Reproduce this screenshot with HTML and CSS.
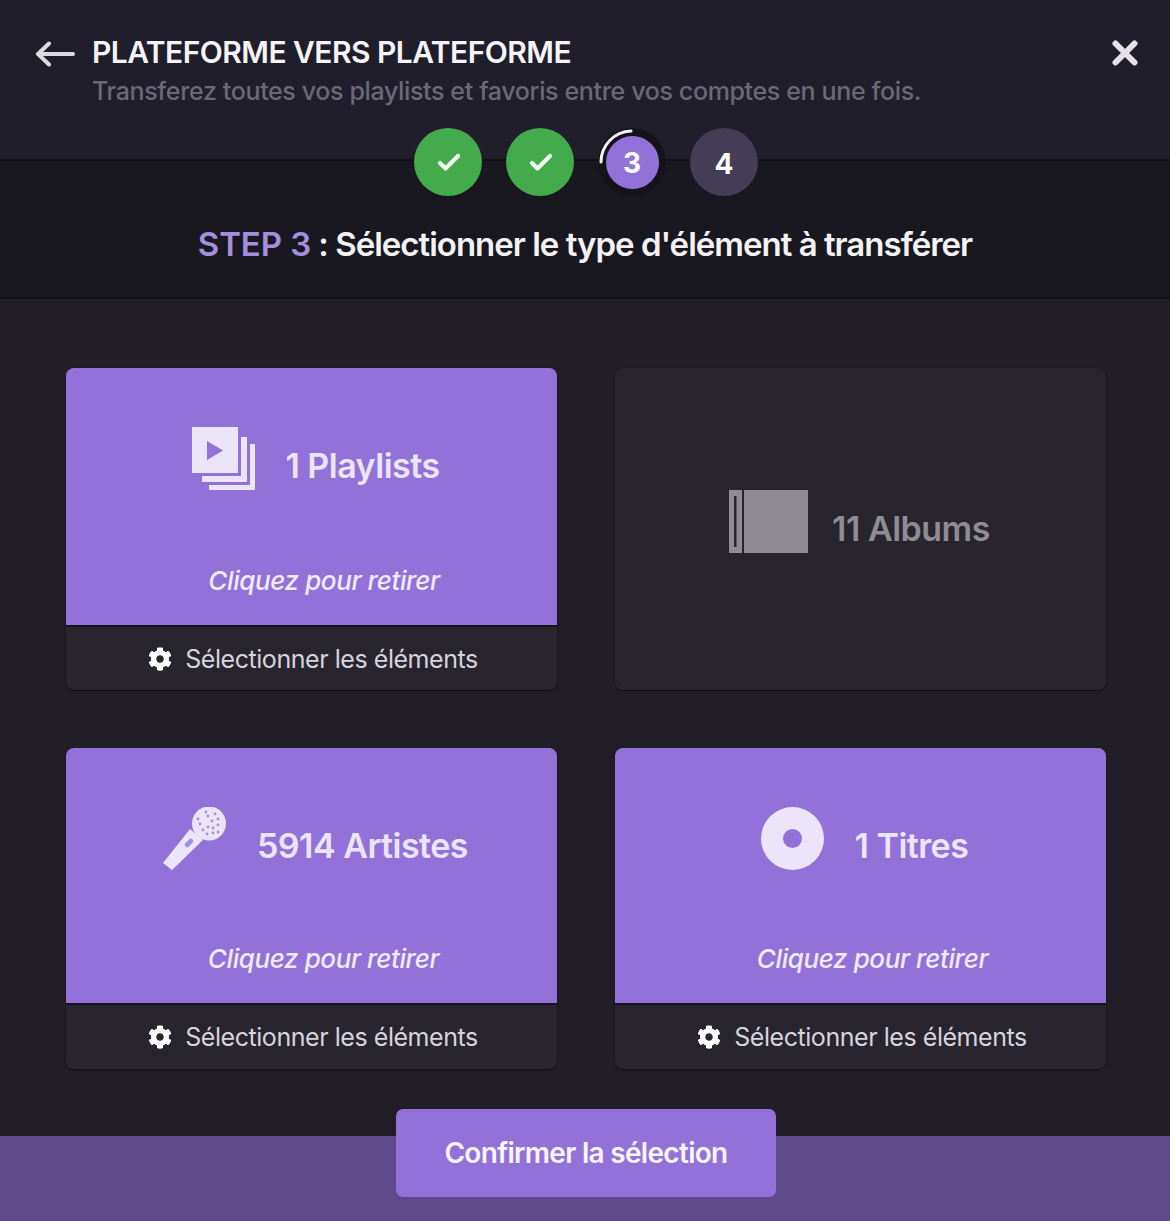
FILE: index.html
```html
<!DOCTYPE html>
<html lang="fr">
<head>
<meta charset="utf-8">
<title>Plateforme vers plateforme</title>
<link rel="stylesheet" href="styles.css">
</head>
<body>
<svg class="defs" width="0" height="0" aria-hidden="true">
  <symbol id="cog" viewBox="0 0 512 512"><path fill="currentColor" d="M487.4 315.7l-42.6-24.6c4.3-23.2 4.3-47 0-70.2l42.6-24.6c4.9-2.8 7.1-8.6 5.5-14-11.1-35.6-30-67.8-54.7-94.6-3.8-4.1-10-5.1-14.8-2.3L380.8 110c-17.9-15.4-38.5-27.3-60.8-35.1V25.8c0-5.6-3.9-10.5-9.4-11.7-36.7-8.2-74.3-7.8-109.2 0-5.5 1.2-9.4 6.1-9.4 11.7V75c-22.2 7.9-42.8 19.8-60.8 35.1L88.7 85.5c-4.9-2.8-11-1.9-14.8 2.3-24.7 26.7-43.6 58.9-54.7 94.6-1.7 5.4.6 11.2 5.5 14L67.3 221c-4.3 23.2-4.3 47 0 70.2l-42.6 24.6c-4.9 2.8-7.1 8.6-5.5 14 11.1 35.6 30 67.8 54.7 94.6 3.8 4.1 10 5.1 14.8 2.3l42.6-24.6c17.9 15.4 38.5 27.3 60.8 35.1v49.2c0 5.6 3.9 10.5 9.4 11.7 36.7 8.2 74.3 7.8 109.2 0 5.5-1.2 9.4-6.1 9.4-11.7v-49.2c22.2-7.9 42.8-19.8 60.8-35.1l42.6 24.6c4.9 2.8 11 1.9 14.8-2.3 24.7-26.7 43.6-58.9 54.7-94.6 1.5-5.5-.7-11.3-5.6-14.1zM256 336c-44.1 0-80-35.9-80-80s35.9-80 80-80 80 35.9 80 80-35.9 80-80 80z"/></symbol>
  <symbol id="check" viewBox="0 0 24 24"><path fill="none" stroke="currentColor" stroke-width="4.2" stroke-linecap="round" stroke-linejoin="round" d="M4 13l5.500 5.500L22 6"/></symbol>
</svg>

<header class="top">
  <div class="top-row">
    <button class="icon-btn back" aria-label="Retour">
      <svg width="40" height="26" viewBox="0 0 40 26"><path fill="none" stroke="currentColor" stroke-width="4" stroke-linecap="round" stroke-linejoin="round" d="M38 13H3M14 2.500L3 13l11 10.500"/></svg>
    </button>
    <div class="heading">
      <h1>PLATEFORME VERS PLATEFORME</h1>
      <p>Transferez toutes vos playlists et favoris entre vos comptes en une fois.</p>
    </div>
    <button class="icon-btn close" aria-label="Fermer">
      <svg width="26" height="26" viewBox="0 0 26 26"><path fill="none" stroke="currentColor" stroke-width="6" stroke-linecap="round" d="M3.500 3.500l19 19M22.500 3.500l-19 19"/></svg>
    </button>
  </div>
  <ol class="steps">
    <li class="step done"><svg width="24" height="24"><use href="#check"/></svg></li>
    <li class="step done"><svg width="24" height="24"><use href="#check"/></svg></li>
    <li class="step current">
      <svg class="arc" width="76" height="76" viewBox="0 0 76 76"><path fill="none" stroke="#f1eef6" stroke-width="3" stroke-linecap="round" d="M7 38A31 31 0 0 1 37 7"/></svg>
      <span class="num">3</span>
    </li>
    <li class="step todo">4</li>
  </ol>
</header>

<section class="band">
  <h2><span class="accent">STEP 3</span> : Sélectionner le type d'élément à transférer</h2>
</section>

<main class="grid">
  <article class="card">
    <div class="pick tall">
      <div class="pick-row">
        <svg class="type-icon" width="63" height="63" viewBox="0 0 63 63">
          <path fill="currentColor" d="M49 10h6v45H10v-6h39zM58 17h5v46H17v-5h41z"/>
          <rect width="46" height="46" fill="currentColor"/>
          <path fill="#9272d8" d="M15 14l16 9.500-16 9.500z"/>
        </svg>
        <span class="label">1 Playlists</span>
      </div>
      <p class="hint">Cliquez pour retirer</p>
    </div>
    <button class="select"><svg width="24" height="24"><use href="#cog"/></svg>Sélectionner les éléments</button>
  </article>

  <article class="card off">
    <div class="off-row">
      <svg class="type-icon" width="79" height="63" viewBox="0 0 79 63">
        <rect x="15" width="64" height="63" fill="currentColor"/>
        <path fill="currentColor" fill-rule="evenodd" d="M0 0h13v63H0zM5 6v51h2.500V6z"/>
      </svg>
      <span class="label">11 Albums</span>
    </div>
  </article>

  <article class="card">
    <div class="pick">
      <div class="pick-row">
        <svg class="type-icon" width="63" height="63" viewBox="0 0 63 63">
          <path fill="currentColor" d="M27 22L40 33 9 63 0 56z"/>
          <circle cx="46" cy="16.500" r="17" fill="currentColor"/>
          <g fill="#a68fe0">
            <circle cx="43" cy="5" r="1.400"/><circle cx="52" cy="7" r="1.400"/><circle cx="35" cy="12" r="1.400"/>
            <circle cx="45" cy="9" r="1.400"/><circle cx="55" cy="12" r="1.400"/><circle cx="37" cy="17" r="1.400"/>
            <circle cx="49" cy="14" r="1.400"/><circle cx="55" cy="18" r="1.400"/><circle cx="40" cy="23" r="1.400"/>
            <circle cx="45" cy="20" r="1.400"/><circle cx="50" cy="21" r="1.400"/><circle cx="55" cy="25" r="1.400"/>
            <circle cx="44" cy="27" r="1.400"/><circle cx="50" cy="26" r="1.400"/>
          </g>
          <rect x="-5" y="-2.500" width="10" height="5" rx="2.500" transform="translate(26 36) rotate(-45)" fill="#a68fe0"/>
        </svg>
        <span class="label">5914 Artistes</span>
      </div>
      <p class="hint">Cliquez pour retirer</p>
    </div>
    <button class="select"><svg width="24" height="24"><use href="#cog"/></svg>Sélectionner les éléments</button>
  </article>

  <article class="card">
    <div class="pick">
      <div class="pick-row">
        <svg class="type-icon" width="63" height="63" viewBox="0 0 63 63">
          <path fill="currentColor" fill-rule="evenodd" d="M31.500 0a31.500 31.500 0 1 1 0 63a31.500 31.500 0 1 1 0-63zM31.500 22a9.500 9.500 0 1 0 0 19a9.500 9.500 0 1 0 0-19z"/>
        </svg>
        <span class="label">1 Titres</span>
      </div>
      <p class="hint">Cliquez pour retirer</p>
    </div>
    <button class="select"><svg width="24" height="24"><use href="#cog"/></svg>Sélectionner les éléments</button>
  </article>
</main>

<footer class="bottom">
  <button class="confirm">Confirmer la sélection</button>
</footer>
</body>
</html>
```

FILE: styles.css
```css
* { box-sizing: border-box; }
html, body { margin: 0; padding: 0; }
body {
  width: 1170px;
  height: 1221px;
  overflow: hidden;
  background: #211e28;
  font-family: Inter, "Liberation Sans", sans-serif;
  color: #fff;
}
.defs { position: absolute; }
button { font: inherit; color: inherit; background: none; border: 0; padding: 0; }
h1, h2, p, ol { margin: 0; padding: 0; }

.top {
  height: 161px;
  background: #201e2a;
  border-bottom: 2px solid #121116;
  padding: 35px 32px 0 35px;
  position: relative;
  z-index: 1;
}
.top-row { display: flex; align-items: flex-start; }
.icon-btn { display: block; flex: none; }
.back { color: #dcdadf; width: 40px; height: 26px; margin-top: 6px; margin-right: 17px; }
.back svg, .close svg { display: block; }
.close { color: #e4e2e8; margin-left: auto; margin-top: 5px; }
.heading { flex: 1; }
.heading h1 {
  font-size: 30px;
  line-height: 34px;
  font-weight: 600;
  letter-spacing: -0.55px;
  color: #f5f4f7;
}
.heading p {
  font-size: 25px;
  line-height: 44px;
  font-weight: 500;
  letter-spacing: -0.36px;
  color: #6c6977;
}

.steps {
  list-style: none;
  display: flex;
  justify-content: center;
  gap: 24px;
  margin-top: 15px;
  margin-left: -35px;
  margin-right: -32px;
  padding-left: 2px;
}
.step {
  width: 68px;
  height: 68px;
  border-radius: 50%;
  display: flex;
  align-items: center;
  justify-content: center;
  font-size: 28px;
  font-weight: 700;
  position: relative;
}
.step.done { background: #44ab4c; color: #f4fbf4; }
.step.todo { background: #453d55; color: #fff; padding-top: 3px; }
.step.current { background: #15131a; }
.num {
  width: 53px;
  height: 53px;
  border-radius: 50%;
  background: #9272d8;
  display: flex;
  align-items: center;
  justify-content: center;
  padding-top: 1px;
}
.arc { position: absolute; left: -4px; top: -4px; }

.band {
  height: 138px;
  background: #191820;
  border-bottom: 2px solid #121116;
  padding-top: 60px;
  text-align: center;
}
.band h2 {
  font-size: 33px;
  line-height: 46px;
  font-weight: 600;
  letter-spacing: -1px;
  color: #f3f2f5;
}
.accent { color: #a48fdf; letter-spacing: -0.1px; }

.grid {
  display: grid;
  grid-template-columns: 491px 491px;
  grid-template-rows: 322px 321px;
  column-gap: 58px;
  row-gap: 58px;
  padding: 69px 0 0 66px;
  height: 837px;
}
.card {
  display: flex;
  flex-direction: column;
  border-radius: 8px;
  background: #28252f;
  box-shadow: 0 1px 2px #100f14;
  overflow: hidden;
}
.pick {
  height: 255px;
  flex: none;
  background: #9272d8;
  color: #ece5fa;
  display: flex;
  flex-direction: column;
  padding: 59px 0 26px 8px;
}
.pick.tall { height: 257px; padding-left: 9px; }
.pick.tall .pick-row { gap: 30px; }
.pick-row, .off-row { display: flex; justify-content: center; gap: 31px; align-items: center; height: 63px; }
.type-icon { display: block; flex: none; }
.label {
  font-size: 34px;
  line-height: 46px;
  padding-top: 15px;
  font-weight: 600;
  letter-spacing: -0.5px;
  height: 62px;
}
.hint {
  margin-top: auto;
  padding-left: 16px;
  text-align: center;
  font-size: 26px;
  line-height: 36px;
  font-style: italic;
  font-weight: 500;
  letter-spacing: -0.4px;
  color: #f0eafb;
}
.select {
  flex: 1;
  border-top: 2px solid #15131b;
  display: flex;
  align-items: center;
  justify-content: center;
  gap: 13px;
  padding-left: 3px;
  font-size: 25px;
  font-weight: 400;
  letter-spacing: -0.45px;
  color: #d6d3dc;
}
.select svg { color: #fff; flex: none; }
.off { justify-content: center; }
.off-row { color: #8f8c94; gap: 24px; margin-bottom: 16px; padding-right: 2px; }
.off-row .label { padding-top: 16px; }

.bottom {
  height: 85px;
  background: #5f4a8b;
  display: flex;
  justify-content: center;
  padding-left: 2px;
}
.confirm {
  width: 380px;
  height: 88px;
  margin-top: -27px;
  flex: none;
  border-radius: 7px;
  background: #9272d8;
  font-size: 28px;
  font-weight: 600;
  letter-spacing: -0.7px;
  color: #f7f4fd;
}
```
